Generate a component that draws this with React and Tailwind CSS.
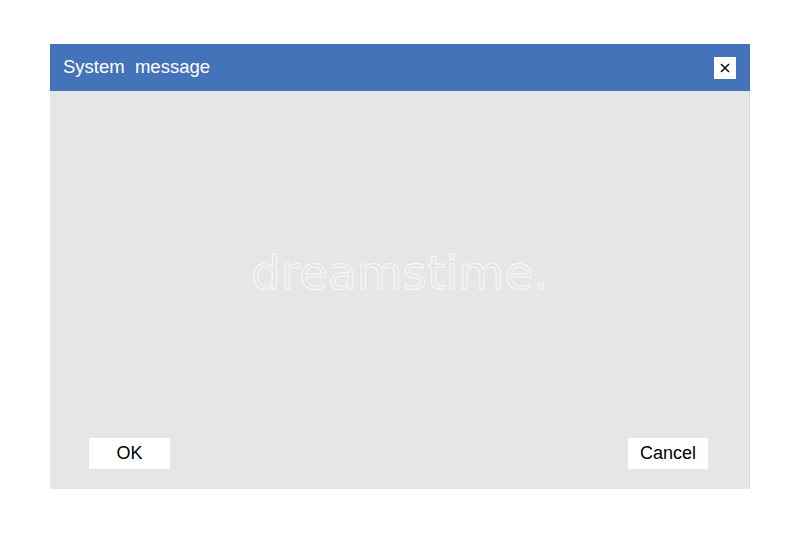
export default function App() {
  return (
    <div className="w-[800px] h-[534px] bg-white pt-[44px] pl-[50px]" style={{ fontFamily: '"Liberation Sans", Arial, sans-serif' }}>
      <div className="w-[700px] flex flex-col">
        <div className="h-[47px] bg-[#4573ba] flex items-center justify-between pl-[13px] pr-[14px]">
          <span className="text-white text-[18.5px] whitespace-pre leading-none -mt-[1px]">System  message</span>
          <div className="w-[22px] h-[22px] bg-white flex items-center justify-center">
            <svg width="10" height="10" viewBox="0 0 10 10">
              <path d="M1 1L9 9M9 1L1 9" stroke="#111" strokeWidth="1.6" />
            </svg>
          </div>
        </div>
        <div className="relative h-[398px] bg-[#e6e6e8] border-r border-[#d9d9db] flex items-end justify-between pl-[39px] pr-[41px] pb-[20px]">
          <div className="absolute left-0 right-0 top-[158px] flex justify-center">
            <span className="text-[47px] leading-none tracking-[0px] text-transparent [-webkit-text-stroke:1px_#f7f7f8]" style={{ fontFamily: '"DejaVu Sans", sans-serif' }}>dreamstime.</span>
          </div>
          <button className="relative w-[81px] h-[31px] bg-white text-[18px] text-black flex items-center justify-center">OK</button>
          <button className="relative w-[80px] h-[31px] bg-white text-[18px] text-black flex items-center justify-center">Cancel</button>
        </div>
      </div>
    </div>
  );
}
